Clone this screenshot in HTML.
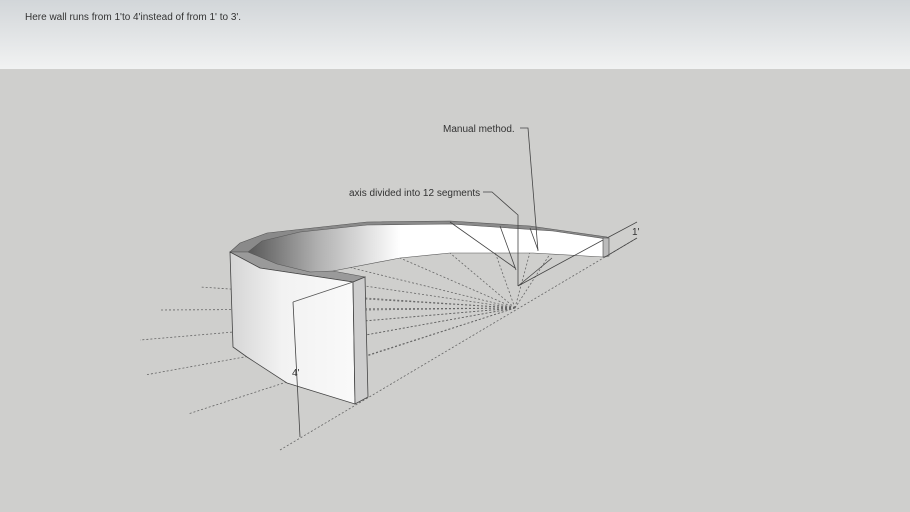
<!DOCTYPE html>
<html><head><style>
body{margin:0;width:910px;height:512px;overflow:hidden;background:#cfcfcd;font-family:"Liberation Sans",sans-serif}
#hdr{position:absolute;left:0;top:0;width:910px;height:69px;background:linear-gradient(#d2d6d9,#f1f2f2)}
#hdr div{position:absolute;left:25px;top:12px;font-size:10px;color:#333}
svg{position:absolute;left:0;top:0}
</style></head><body>
<div id="hdr"><div>Here wall runs from 1'to 4'instead of from 1' to 3'.</div></div>
<svg width="910" height="512" viewBox="0 0 910 512">
<defs>
<linearGradient id="g" x1="250" y1="0" x2="400" y2="0" gradientUnits="userSpaceOnUse">
<stop offset="0" stop-color="#5a5a5a"/><stop offset="0.45" stop-color="#b0b0b0"/><stop offset="1" stop-color="#fff"/></linearGradient>
<linearGradient id="w" x1="230" y1="0" x2="360" y2="0" gradientUnits="userSpaceOnUse">
<stop offset="0" stop-color="#d5d5d5"/><stop offset="0.4" stop-color="#f2f2f2"/><stop offset="1" stop-color="#fafafa"/></linearGradient>
</defs>
<g stroke="#666" stroke-width="0.8" stroke-dasharray="2,2" fill="none">
<line x1="515" y1="308" x2="200" y2="287"/><line x1="515" y1="308" x2="160" y2="310"/>
<line x1="515" y1="308" x2="140" y2="340"/><line x1="515" y1="308" x2="145" y2="375"/>
<line x1="515" y1="308" x2="188" y2="414"/>
<line x1="515" y1="308" x2="340" y2="265"/><line x1="515" y1="308" x2="400" y2="258"/>
<line x1="515" y1="308" x2="450" y2="253"/><line x1="515" y1="308" x2="495" y2="252"/>
<line x1="515" y1="308" x2="530" y2="252"/><line x1="515" y1="308" x2="550" y2="254"/>
<line x1="515" y1="308" x2="365" y2="286"/><line x1="515" y1="308" x2="365" y2="299"/>
<line x1="515" y1="308" x2="365" y2="310"/><line x1="515" y1="308" x2="365" y2="321"/>
<line x1="515" y1="308" x2="365" y2="335"/><line x1="515" y1="308" x2="368" y2="355"/>
<line x1="280" y1="450" x2="637" y2="238"/>
</g>
<!-- inner surface -->
<path d="M248,252 L262,241 L300,232 L367,225 L450,224 L553,231 L607,239 L603,257 L533,253 L450,253 L400,258 L333,271 L310,272 L277,264 Z" fill="url(#g)"/>
<!-- far top band -->
<path d="M230,252 L240,243 L267,233 L367,222 L450,221 L530,226 L607,237 L607,239 L553,231 L450,224 L367,225 L300,232 L262,241 L248,252 Z" fill="#8a8a8a" stroke="#555" stroke-width="0.6"/>
<!-- near top band -->
<path d="M230,252 L248,252 L277,264 L310,272 L333,271 L365,277 L353,282 L300,274 L260,268 Z" fill="#9a9a9a" stroke="#555" stroke-width="0.6"/>
<!-- outer wall -->
<path d="M230,252 L260,268 L300,274 L353,282 L355,404 L287,383 L247,357 L233,347 Z" fill="url(#w)" stroke="#444" stroke-width="0.8"/>
<path d="M353,282 L365,277 L368,397 L355,404 Z" fill="#cdcdcd" stroke="#444" stroke-width="0.8"/>
<path d="M293,302 L353,282" stroke="#555" stroke-width="0.8"/>
<path d="M333,271 L400,258 L450,253 L533,253 L603,257" stroke="#555" stroke-width="0.6" fill="none"/>
<path d="M603,238 L609,238 L609,256 L603,257 Z" fill="#bbb" stroke="#444" stroke-width="0.6"/>
<g stroke="#444" stroke-width="0.8" fill="none">
<path d="M450,222 L515,268 M500,226 L516,270 M518,286 L603,240 M518,286 L552,258 M530,228 L538,250"/>
<path d="M483,192 L492,192 L518,215 L518,286"/>
<path d="M520,128 L528,128 L538,251"/>
<path d="M293,302 L300,437 M607,238 L637,222 M605,257 L637,238"/>
</g>
<g fill="#333" font-family="Liberation Sans,sans-serif" font-size="10">
<text x="443" y="132">Manual method.</text>
<text x="349" y="196">axis divided into 12 segments</text>
<text x="292" y="376">4'</text>
<text x="632" y="235">1'</text>
</g>
</svg>
</body></html>
